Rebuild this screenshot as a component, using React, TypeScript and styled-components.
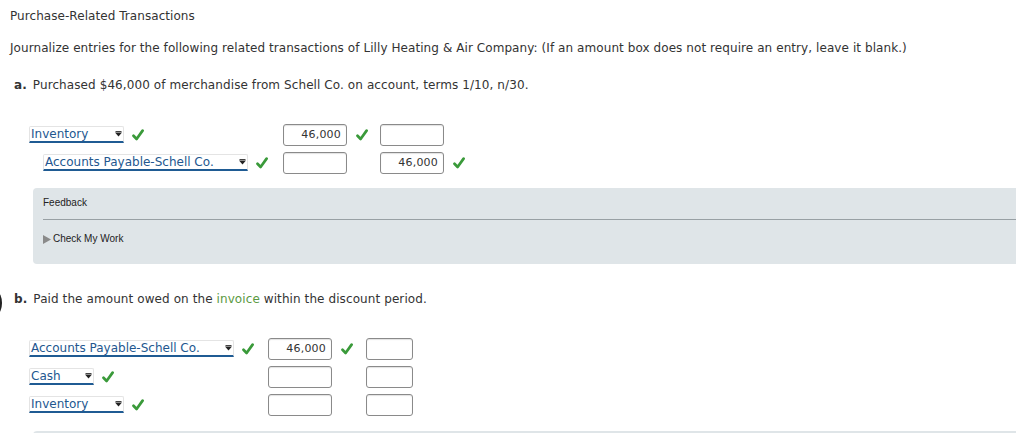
import React from "react";
import styled, { createGlobalStyle } from "styled-components";

const Global = createGlobalStyle`
  html, body { margin: 0; padding: 0; background: #fff; }
  body { font-family: "DejaVu Sans", Verdana, sans-serif; color: #333; overflow: hidden; }
`;

const Page = styled.div`
  position: relative;
  padding: 9px 0 0 10px;
  width: 1016px;
  height: 433px;
  box-sizing: border-box;
  overflow: hidden;
`;

const Title = styled.div`
  font-size: 12px;
  line-height: 15px;
  letter-spacing: 0.06px;
`;

const Instruction = styled.div`
  margin-top: 17px;
  font-size: 12px;
  line-height: 15px;
  letter-spacing: 0.075px;
`;

const PartHeader = styled.div<{ $top: number }>`
  margin-top: ${(p) => p.$top}px;
  padding-left: 4px;
  font-size: 12px;
  line-height: 15px;
  letter-spacing: 0.09px;
  display: flex;
  gap: 6px;
`;

const PartLetter = styled.b`
  font-weight: bold;
  color: #333;
`;

const Link = styled.span`
  color: #5b9a42;
`;

const Table = styled.div<{ $cols: string; $top: number }>`
  margin-top: ${(p) => p.$top}px;
  margin-left: 19px;
  display: grid;
  grid-template-columns: ${(p) => p.$cols};
  row-gap: 6px;
  align-items: center;
`;

const Cell = styled.div<{ $indent?: number }>`
  display: flex;
  align-items: center;
  gap: 8px;
  padding-left: ${(p) => p.$indent || 0}px;
  height: 22px;
`;

const AmountCell = styled.div`
  display: flex;
  align-items: center;
  gap: 9px;
  height: 22px;
`;

const SelectBox = styled.div<{ $w: number }>`
  width: ${(p) => p.$w}px;
  height: 17px;
  box-sizing: border-box;
  border: 1px solid #e4e4e4;
  border-bottom: 2px solid #1f5b93;
  border-radius: 2px 2px 0 0;
  display: flex;
  align-items: center;
  justify-content: space-between;
  padding: 0 1px 0 1px;
  font-size: 12px;
  line-height: 14px;
  color: #23578f;
  margin-top: -2px;
`;

const SelectText = styled.span`
  white-space: nowrap;
`;

const Input = styled.div<{ $w?: number }>`
  width: ${(p) => p.$w || 64}px;
  height: 22px;
  box-sizing: border-box;
  border: 1px solid #8a8a8a;
  border-radius: 3px;
  box-shadow: inset 0 1px 1px rgba(0, 0, 0, 0.12);
  background: #fff;
  font-size: 11px;
  line-height: 20px;
  text-align: right;
  padding-right: 5px;
  color: #333;
  letter-spacing: 0.2px;
`;

const Panel = styled.div<{ $top: number; $h: number }>`
  margin-top: ${(p) => p.$top}px;
  margin-left: 23px;
  height: ${(p) => p.$h}px;
  background: #dfe5e8;
  border-radius: 4px 0 0 4px;
  box-sizing: border-box;
  padding: 9px 0 0 10px;
  font-family: "Liberation Sans", Arial, sans-serif;
  font-size: 10px;
  color: #222;
`;

const PanelTitle = styled.div`
  line-height: 12px;
  padding-bottom: 10px;
  border-bottom: 1px solid #98a0a4;
`;

const CheckWork = styled.div`
  margin-top: 13px;
  display: flex;
  align-items: center;
  gap: 2px;
  line-height: 12px;
`;

const Bracket = styled.span`
  position: absolute;
  left: -8px;
  top: 292px;
  width: 10px;
  height: 22px;
  box-sizing: border-box;
  border-right: 3px solid #222;
  border-radius: 50%;
`;

const Check = () => (
  <svg width="12" height="12" viewBox="0 0 12 12">
    <path d="M1.5 6.8 L4.6 10 L10.6 1.6" fill="none" stroke="#3a9a3a" strokeWidth="2.7" strokeLinecap="round" strokeLinejoin="round" />
  </svg>
);

const Arrow = () => (
  <svg width="7" height="6" viewBox="0 0 7 6">
    <rect x="0.5" y="0" width="6" height="1" fill="#444" />
    <polygon points="0,1.5 7,1.5 3.5,5.5" fill="#222" />
  </svg>
);

const Select = ({ label, w }: { label: string; w: number }) => (
  <SelectBox $w={w}>
    <SelectText>{label}</SelectText>
    <Arrow />
  </SelectBox>
);

const Feedback = () => (
  <Panel $top={14} $h={76}>
    <PanelTitle>Feedback</PanelTitle>
    <CheckWork>
      <svg width="8" height="9" viewBox="0 0 8 9">
        <polygon points="0,0 8,4.5 0,9" fill="#8a8a8a" />
      </svg>
      <span>Check My Work</span>
    </CheckWork>
  </Panel>
);

export default function App() {
  return (
    <Page>
      <Global />
      <Title>Purchase-Related Transactions</Title>
      <Instruction>
        Journalize entries for the following related transactions of Lilly Heating &amp; Air Company: (If an amount box does not require an entry, leave it blank.)
      </Instruction>
      <PartHeader $top={22}>
        <PartLetter>a.</PartLetter>
        <span>Purchased $46,000 of merchandise from Schell Co. on account, terms 1/10, n/30.</span>
      </PartHeader>

      <Table $cols="254px 97px auto" $top={31}>
        <Cell>
          <Select label="Inventory" w={95} />
          <Check />
        </Cell>
        <AmountCell>
          <Input>46,000</Input>
          <Check />
        </AmountCell>
        <AmountCell>
          <Input />
        </AmountCell>

        <Cell $indent={14}>
          <Select label="Accounts Payable-Schell Co." w={205} />
          <Check />
        </Cell>
        <AmountCell>
          <Input />
        </AmountCell>
        <AmountCell>
          <Input>46,000</Input>
          <Check />
        </AmountCell>
      </Table>

      <Feedback />

      <Bracket />
      <PartHeader $top={28}>
        <PartLetter>b.</PartLetter>
        <span>
          Paid the amount owed on the <Link>invoice</Link> within the discount period.
        </span>
      </PartHeader>

      <Table $cols="239px 98px auto" $top={31}>
        <Cell>
          <Select label="Accounts Payable-Schell Co." w={205} />
          <Check />
        </Cell>
        <AmountCell>
          <Input>46,000</Input>
          <Check />
        </AmountCell>
        <AmountCell>
          <Input $w={47} />
        </AmountCell>

        <Cell>
          <Select label="Cash" w={65} />
          <Check />
        </Cell>
        <AmountCell>
          <Input />
        </AmountCell>
        <AmountCell>
          <Input $w={47} />
        </AmountCell>

        <Cell>
          <Select label="Inventory" w={95} />
          <Check />
        </Cell>
        <AmountCell>
          <Input />
        </AmountCell>
        <AmountCell>
          <Input $w={47} />
        </AmountCell>
      </Table>

      <Panel $top={15} $h={40} />
    </Page>
  );
}
